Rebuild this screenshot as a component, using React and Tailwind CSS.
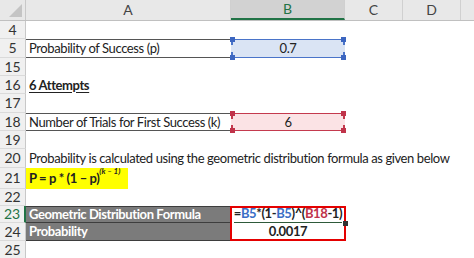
const COLS = [
  { label: 'A', w: 'w-[205px]' },
  { label: 'B', w: 'w-[114px]', active: true },
  { label: 'C', w: 'w-[58px]' },
  { label: 'D', w: 'w-[58px]' },
  { label: '', w: 'w-[60px]' },
];

function Handles({ color }) {
  const base = `absolute w-[5px] h-[5px] ${color}`;
  return (
    <>
      <span className={`${base} -left-[3px] -top-[3px]`} />
      <span className={`${base} -right-[3px] -top-[3px]`} />
      <span className={`${base} -left-[3px] -bottom-[3px]`} />
      <span className={`${base} -right-[3px] -bottom-[3px]`} />
    </>
  );
}

function Row({ n, h, active, children }) {
  return (
    <div className={`flex ${h}`}>
      <div
        className={`w-[26px] shrink-0 flex items-center justify-center bg-[#f0f0f0] border-b border-[#dadada] border-r text-[14px] tracking-normal ${
          active ? 'text-[#217346] border-r-[#217346] border-r-2' : 'text-[#333] border-r-[#c8c8c8]'
        }`}
      >
        {n}
      </div>
      <div className="flex-1 flex min-w-0 whitespace-nowrap">{children}</div>
    </div>
  );
}

export default function App() {
  return (
    <div
      className="w-[474px] h-[258px] overflow-hidden bg-white text-[13px] tracking-[-0.4px] text-[#222] leading-none"
      style={{ fontFamily: 'Lato, "Open Sans", sans-serif' }}
    >
      {/* column header */}
      <div className="flex h-[21px] bg-[#e8e8e8] border-b border-[#c0c0c0] text-[14px] tracking-normal">
        <div className="w-[26px] shrink-0 border-r border-[#c8c8c8] relative">
          <svg className="absolute right-[3px] bottom-[3px]" width="13" height="13" viewBox="0 0 13 13">
            <polygon points="13,0 13,13 0,13" fill="#c4c4c4" />
          </svg>
        </div>
        {COLS.map((c, i) => (
          <div
            key={i}
            className={`${c.w} shrink-0 flex items-center justify-center border-r border-[#d0d0d0] ${
              c.active ? 'bg-[#d2d2d2] text-[#217346] border-b-2 border-b-[#217346]' : 'text-[#444]'
            }`}
          >
            {c.label}
          </div>
        ))}
      </div>

      <Row n="4" h="h-[18px]" />

      <Row n="5" h="h-[19px]">
        <div className="w-[205px] shrink-0 border-y border-[#555] flex items-center pl-[3px]">
          Probability of Success (p)
        </div>
        <div className="w-[114px] shrink-0 relative bg-[#dae4f4] border-y border-[#4a74c9] border-x-2 [border-left-style:dashed] [border-right-style:dashed] flex items-center justify-center">
          0.7
          <Handles color="bg-[#3c66c0]" />
        </div>
      </Row>

      <Row n="15" h="h-[18px]" />

      <Row n="16" h="h-[18px]">
        <div className="flex items-center pl-[3px] font-bold underline underline-offset-2">6 Attempts</div>
      </Row>

      <Row n="17" h="h-[19px]" />

      <Row n="18" h="h-[18px]">
        <div className="w-[205px] shrink-0 border-y border-[#555] flex items-center pl-[3px]">
          Number of Trials for First Success (k)
        </div>
        <div className="w-[114px] shrink-0 relative bg-[#fbe3e5] border-y border-[#c43a4e] border-x-2 [border-left-style:dashed] [border-right-style:dashed] flex items-center justify-center">
          6
          <Handles color="bg-[#c0334a]" />
        </div>
      </Row>

      <Row n="19" h="h-[18px]" />

      <Row n="20" h="h-[19px]">
        <div className="flex items-center pl-[3px]">
          Probability is calculated using the geometric distribution formula as given below
        </div>
      </Row>

      <Row n="21" h="h-[21px]">
        <div className="w-[102px] bg-[#ffff00] flex items-center pl-[3px] font-bold">
          P = p * (1 – p)
          <sup className="text-[8px] italic -mt-[7px] tracking-normal">(k – 1)</sup>
        </div>
      </Row>

      <Row n="22" h="h-[17px]" />

      <Row n="23" h="h-[17px]" active>
        <div className="w-[205px] shrink-0 bg-[#7b7b7b] border-y border-[#3d3d3d] flex items-center pl-[3px] text-white font-bold">
          Geometric Distribution Formula
        </div>
        <div className="w-[116px] -ml-[1px] shrink-0 border-2 border-b-0 border-[#e40000] flex items-end justify-center font-bold relative">
          <span className="border-b border-[#2e5a3a] pb-[2px]">
            =<span className="text-[#3a6ec6]">B5</span>*(1-<span className="text-[#3a6ec6]">B5</span>)^(<span className="text-[#c0334a]">B18</span>-1)
          </span>
          <span className="absolute -right-[4px] -bottom-[3px] w-[5px] h-[5px] bg-[#333]" />
        </div>
      </Row>

      <Row n="24" h="h-[18px]">
        <div className="w-[205px] shrink-0 bg-[#7b7b7b] border-b border-[#3d3d3d] flex items-center pl-[3px] text-white font-bold">
          Probability
        </div>
        <div className="w-[116px] -ml-[1px] shrink-0 border-2 border-t-0 border-[#e40000] flex items-center justify-center font-bold">
          0.0017
        </div>
      </Row>

      <Row n="25" h="h-[18px]" />
    </div>
  );
}
